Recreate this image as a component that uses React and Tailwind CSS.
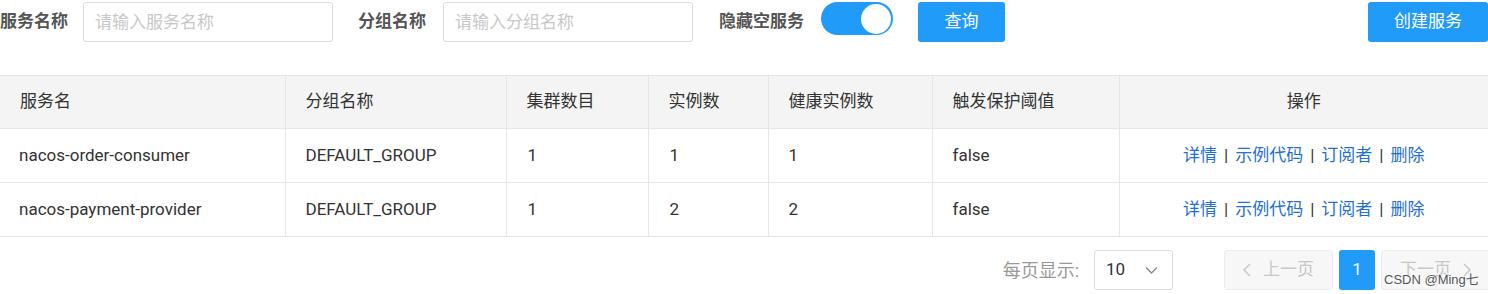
import React from 'react';

const columns = [
  { title: '服务名', w: 'w-[285px]' },
  { title: '分组名称', w: 'w-[221px]' },
  { title: '集群数目', w: 'w-[142px]' },
  { title: '实例数', w: 'w-[120px]' },
  { title: '健康实例数', w: 'w-[164px]' },
  { title: '触发保护阈值', w: 'w-[187px]' },
  { title: '操作', w: 'w-[369px]', center: true },
];

const services = [
  { name: 'nacos-order-consumer', group: 'DEFAULT_GROUP', clusters: 1, instances: 1, healthy: 1, threshold: 'false' },
  { name: 'nacos-payment-provider', group: 'DEFAULT_GROUP', clusters: 1, instances: 2, healthy: 2, threshold: 'false' },
];

const actions = ['详情', '示例代码', '订阅者', '删除'];

const App = () => {
  return (
    <div className="relative w-[1488px] h-[294px] bg-white overflow-hidden text-[17px] text-[#333] font-['Roboto','Noto_Sans_CJK_SC',sans-serif]">
      {/* search bar */}
      <div className="flex items-center h-[40px] mt-[2px]">
        <span className="font-bold text-[#555]">服务名称</span>
        <input
          className="ml-[15px] w-[250px] h-[40px] px-[11px] rounded-[3px] border border-[#dcdcdc] outline-none placeholder:text-[#c8c8c8]"
          placeholder="请输入服务名称"
        />
        <span className="ml-[25px] font-bold text-[#555]">分组名称</span>
        <input
          className="ml-[17px] w-[250px] h-[40px] px-[11px] rounded-[3px] border border-[#dcdcdc] outline-none placeholder:text-[#c8c8c8]"
          placeholder="请输入分组名称"
        />
        <span className="ml-[26px] font-bold text-[#555]">隐藏空服务</span>
        <div className="ml-[17px] self-start w-[72px] h-[33px] rounded-full bg-[#209bfa] flex items-center justify-end pr-[2px]">
          <div className="w-[30px] h-[30px] rounded-full bg-white" />
        </div>
        <button className="ml-[25px] w-[87px] h-[40px] rounded-[3px] bg-[#209bfa] text-white">查询</button>
        <button className="ml-auto w-[120px] h-[40px] rounded-[3px] bg-[#209bfa] text-white">创建服务</button>
      </div>

      {/* table */}
      <table className="mt-[33px] w-[1488px] table-fixed border-collapse">
        <thead>
          <tr className="h-[53px] bg-[#f4f4f4]">
            {columns.map((c, i) => (
              <th
                key={c.title}
                className={`${c.w} font-normal border-t border-b border-[#e6e6e6] ${i > 0 ? 'border-l' : ''} ${c.center ? 'text-center' : 'text-left pl-[20px]'}`}
              >
                {c.title}
              </th>
            ))}
          </tr>
        </thead>
        <tbody>
          {services.map(s => (
            <tr key={s.name} className="h-[54px]">
              <td className="pl-[19px] border-b border-[#e6e6e6]">{s.name}</td>
              <td className="pl-[20px] border-b border-l border-[#e6e6e6]">{s.group}</td>
              <td className="pl-[21px] border-b border-l border-[#e6e6e6]">{s.clusters}</td>
              <td className="pl-[21px] border-b border-l border-[#e6e6e6]">{s.instances}</td>
              <td className="pl-[20px] border-b border-l border-[#e6e6e6]">{s.healthy}</td>
              <td className="pl-[20px] border-b border-l border-[#e6e6e6]">{s.threshold}</td>
              <td className="text-center border-b border-l border-[#e6e6e6]">
                {actions.map((a, i) => (
                  <span key={a}>
                    {i > 0 && <span className="text-[#333] mx-[7px]">|</span>}
                    <a className="text-[#1f6fd6] cursor-pointer">{a}</a>
                  </span>
                ))}
              </td>
            </tr>
          ))}
        </tbody>
      </table>

      {/* pagination */}
      <div className="flex items-center justify-end mt-[13px] h-[40px] -mr-[2px]">
        <span className="text-[#999] text-[18px]">每页显示:</span>
        <div className="ml-[15px] w-[79px] h-[40px] border border-[#dcdcdc] rounded-[3px] flex items-center justify-between pl-[11px] pr-[14px]">
          <span>10</span>
          <svg width="13" height="8" viewBox="0 0 13 8" fill="none" stroke="#888" strokeWidth="1.4">
            <path d="M1 1.5l5.5 5.5 5.5-5.5" />
          </svg>
        </div>
        <button className="ml-[51px] w-[109px] h-[40px] rounded-[3px] border border-[#ececec] bg-[#f7f7f7] text-[#c8c8c8] flex items-center justify-center gap-[12px]">
          <svg width="8" height="14" viewBox="0 0 8 14" fill="none" stroke="#c8c8c8" strokeWidth="1.5">
            <path d="M7 1L1 7l6 6" />
          </svg>
          <span>上一页</span>
        </button>
        <button className="ml-[6px] w-[36px] h-[40px] rounded-[3px] bg-[#209bfa] text-white">1</button>
        <button className="ml-[6px] w-[109px] h-[40px] rounded-[3px] border border-[#ececec] bg-[#f7f7f7] text-[#c8c8c8] flex items-center justify-center gap-[12px]">
          <span>下一页</span>
          <svg width="8" height="14" viewBox="0 0 8 14" fill="none" stroke="#c8c8c8" strokeWidth="1.5">
            <path d="M1 1l6 6-6 6" />
          </svg>
        </button>
      </div>

      {/* watermark */}
      <div className="absolute left-[1384px] top-[270px] text-[13px] text-[#555] font-['Liberation_Sans','Noto_Sans_CJK_SC',sans-serif] [text-shadow:0_0_2px_#fff]">
        CSDN @Ming七
      </div>
    </div>
  );
};

export default App;
